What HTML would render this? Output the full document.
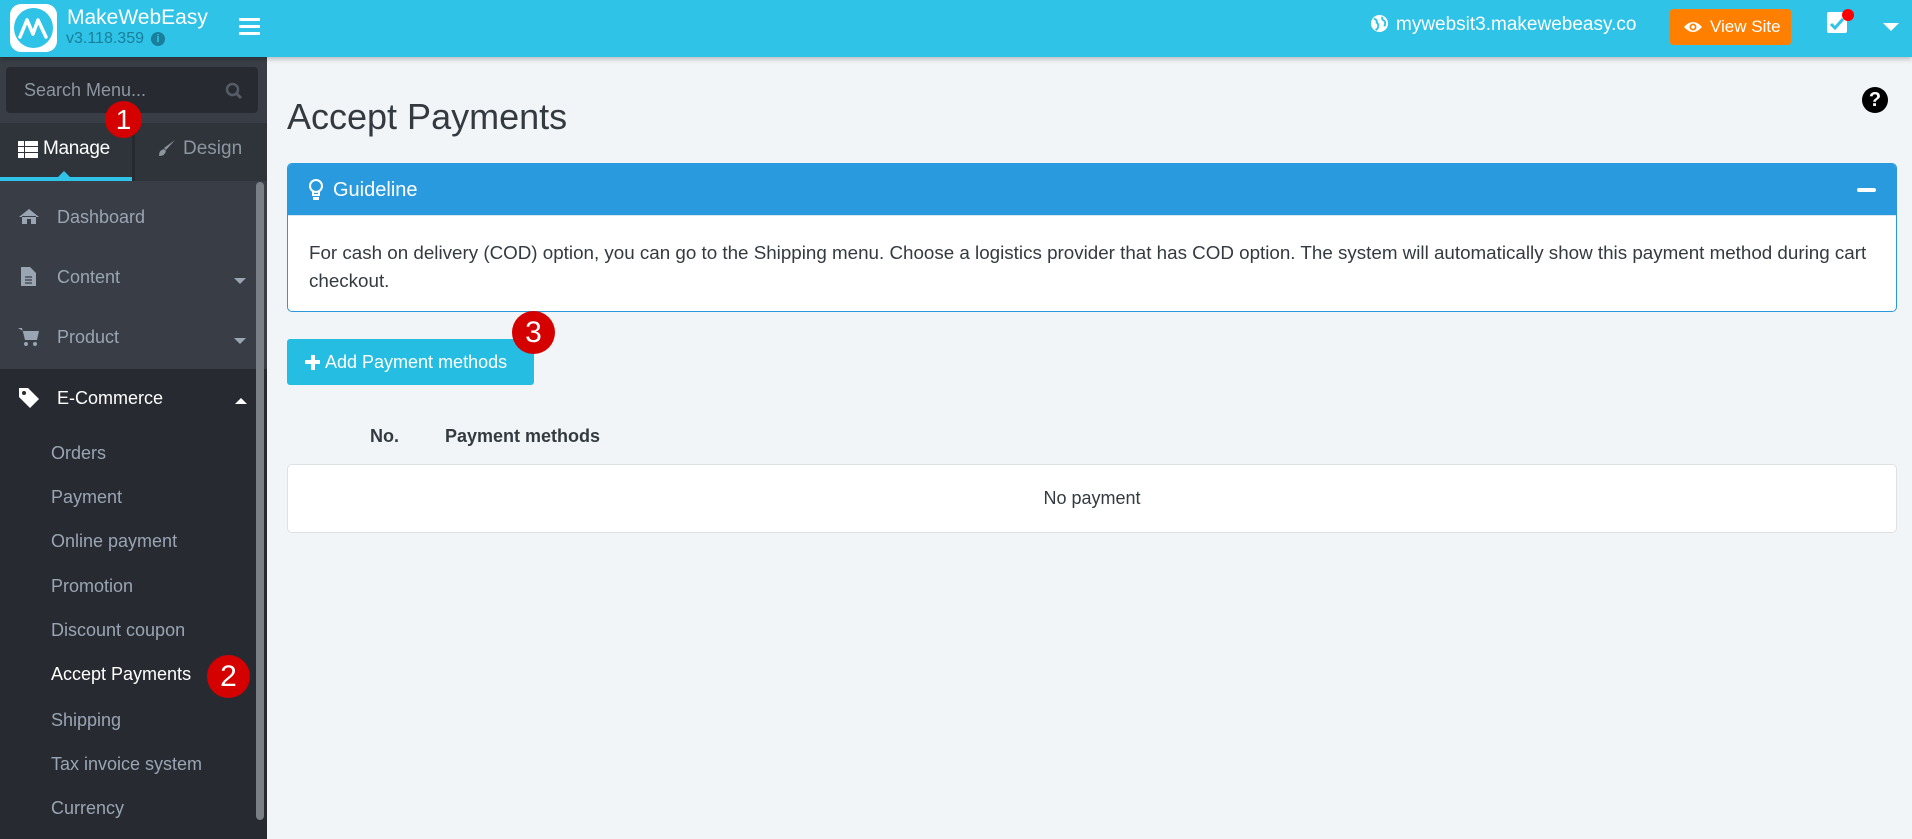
<!DOCTYPE html>
<html><head><meta charset="utf-8"><style>
*{box-sizing:border-box;margin:0;padding:0}
body{width:1912px;height:839px;overflow:hidden;background:#f2f5f8;font-family:"Liberation Sans",Arial,sans-serif;position:relative}
.hdr{position:absolute;left:0;top:0;width:1912px;height:57px;background:#2ec3e7;box-shadow:0 2px 5px rgba(0,0,0,.25);z-index:2}
.abs{position:absolute}
.side{position:absolute;left:0;top:57px;width:267px;height:782px;background:#393e46}
.menu{position:absolute;left:0;width:267px;color:#9aa5b3;font-size:18px}
.sub{position:absolute;left:51px;color:#9aa5b3;font-size:18px}
.badge{position:absolute;width:43px;height:43px;border-radius:50%;background:#d50000;color:#fff;font-size:30px;text-align:center;line-height:43px;z-index:5}
.caret{position:absolute;width:0;height:0;border-left:6px solid transparent;border-right:6px solid transparent}
</style></head><body>
<div class="hdr">
 <div class="abs" style="left:10px;top:4px;width:47px;height:48px;background:#fff;border-radius:11px"></div>
 <div class="abs" style="left:14px;top:8px;width:39px;height:40px;background:#2ec3e7;border-radius:50%"></div>
 <svg class="abs" style="left:17px;top:15px" width="34" height="26" viewBox="0 0 34 26"><path d="M3 22 L10 5 L16 19 L21 5 L29 22" fill="none" stroke="#fff" stroke-width="3.5" stroke-linejoin="round" stroke-linecap="round"/></svg>
 <div class="abs" style="left:67px;top:6px;color:#fff;font-size:21px">MakeWebEasy</div>
 <div class="abs" style="left:66px;top:30px;color:#1a7f9b;font-size:16px">v3.118.359</div>
 <div class="abs" style="left:151px;top:32px;width:14px;height:14px;border-radius:50%;background:#1a7f9b;color:#2ec3e7;font-size:11px;font-weight:bold;text-align:center;line-height:14px">i</div>
 <div class="abs" style="left:239px;top:18px;width:21px;height:3px;background:#fff;box-shadow:0 7px 0 #fff,0 14px 0 #fff"></div>
 <svg class="abs" style="left:1370px;top:14px" width="19" height="19" viewBox="0 0 20 20"><circle cx="10" cy="10" r="9" fill="#fff"/><path d="M4 5 Q8 6 7 9 Q10 11 8 15 L6 17 M13 3 Q12 6 15 7 Q17 10 15 13" fill="none" stroke="#2ec3e7" stroke-width="2"/></svg>
 <div class="abs" style="left:1396px;top:14px;color:#fff;font-size:19px">mywebsit3.makewebeasy.co</div>
 <div class="abs" style="left:1670px;top:9px;width:121px;height:36px;background:#ff8000;border-radius:3px;color:#fff;font-size:17px;line-height:36px;padding-left:40px">View Site</div>
 <svg class="abs" style="left:1683px;top:20px" width="20" height="14" viewBox="0 0 20 14"><path d="M1 7 Q10 -3 19 7 Q10 17 1 7Z" fill="#fff"/><circle cx="10" cy="7" r="3.5" fill="#ff8000"/><circle cx="10" cy="7" r="1.8" fill="#fff"/></svg>
 <div class="abs" style="left:1827px;top:12px;width:20px;height:21px;background:#fff;border-radius:2px"></div>
 <svg class="abs" style="left:1829px;top:15px" width="16" height="16"><path d="M2 9 L6 13 L14 4" fill="none" stroke="#2ec3e7" stroke-width="3"/></svg>
 <div class="abs" style="left:1842px;top:9px;width:12px;height:12px;border-radius:50%;background:#f00"></div>
 <div class="caret" style="left:1883px;top:23px;border-top:8px solid #fff;border-left-width:8px;border-right-width:8px"></div>
</div>

<div class="side">
 <div class="abs" style="left:6px;top:10px;width:252px;height:46px;background:#272b31;border-radius:4px;color:#8d96a0;font-size:18px;line-height:46px;padding-left:18px">Search Menu...</div>
 <svg class="abs" style="left:225px;top:25px" width="18" height="18"><circle cx="7.5" cy="7.5" r="5.5" fill="none" stroke="#555c66" stroke-width="2.5"/><path d="M11.5 11.5 L16 16" stroke="#555c66" stroke-width="3"/></svg>
 <div class="abs" style="left:0;top:66px;width:267px;height:58px;background:#2f343b"></div>
 <div class="abs" style="left:132px;top:66px;width:3px;height:58px;background:#262a30"></div>
 <div class="abs" style="left:0;top:120px;width:132px;height:4px;background:#2ec3e7"></div>
 <div class="caret" style="left:58px;top:114px;border-bottom:6px solid #2ec3e7"></div>
 <div class="abs" style="left:18px;top:84px;width:20px;height:17px;background:repeating-linear-gradient(#fff 0 5px,#2f343b 5px 6px)"></div>
 <div class="abs" style="left:24px;top:84px;width:1px;height:17px;background:#2f343b"></div>
 <div class="abs" style="left:43px;top:81px;color:#fff;font-size:19px;letter-spacing:-0.3px">Manage</div>
 <svg class="abs" style="left:158px;top:82px" width="18" height="18"><path d="M17 1 L8 11 L6 9Z" fill="#8d96a0"/><path d="M6 10 Q1 11 1 17 Q7 17 8 12Z" fill="#8d96a0"/></svg>
 <div class="abs" style="left:183px;top:81px;color:#8d96a0;font-size:19px">Design</div>
 <div class="abs" style="left:0;top:312px;width:267px;height:470px;background:#272b31"></div>
 <div class="abs" style="left:256px;top:125px;width:8px;height:638px;background:#7a7f85;border-radius:4px"></div>

 <svg class="abs" style="left:18px;top:151px" width="22" height="17"><path d="M1 9 L11 1 L21 9 M4 8 V16 H9 V11 H13 V16 H18 V8" fill="#9aa5b3"/></svg>
 <div class="menu" style="top:150px;left:57px;width:auto">Dashboard</div>
 <svg class="abs" style="left:21px;top:210px" width="15" height="19"><path d="M0 0 H9 L15 6 V19 H0Z" fill="#9aa5b3"/><path d="M4 10 H11 M4 13 H11 M4 16 H11" stroke="#393e46" stroke-width="1.3"/></svg>
 <div class="menu" style="top:210px;left:57px;width:auto">Content</div>
 <div class="caret" style="left:234px;top:221px;border-top:6px solid #9aa5b3"></div>
 <svg class="abs" style="left:18px;top:270px" width="22" height="20"><path d="M0 1 H4 L7 13 H19 L21 4 H5" fill="#9aa5b3"/><circle cx="8" cy="17" r="2" fill="#9aa5b3"/><circle cx="17" cy="17" r="2" fill="#9aa5b3"/></svg>
 <div class="menu" style="top:270px;left:57px;width:auto">Product</div>
 <div class="caret" style="left:234px;top:281px;border-top:6px solid #9aa5b3"></div>
 <svg class="abs" style="left:19px;top:331px" width="21" height="20"><path d="M0 0 H9 L20 11 L11 20 L0 9Z" fill="#fff"/><circle cx="5" cy="5" r="2" fill="#272b31"/></svg>
 <div class="menu" style="top:331px;left:57px;width:auto;color:#fff">E-Commerce</div>
 <div class="caret" style="left:235px;top:341px;border-bottom:6px solid #fff"></div>

 <div class="sub" style="top:386px">Orders</div>
 <div class="sub" style="top:430px">Payment</div>
 <div class="sub" style="top:474px">Online payment</div>
 <div class="sub" style="top:519px">Promotion</div>
 <div class="sub" style="top:563px">Discount coupon</div>
 <div class="sub" style="top:607px;color:#fff">Accept Payments</div>
 <div class="sub" style="top:653px">Shipping</div>
 <div class="sub" style="top:697px">Tax invoice system</div>
 <div class="sub" style="top:741px">Currency</div>
</div>
<div class="badge" style="left:105px;top:101px;width:37px;height:37px;line-height:37px;font-size:28px">1</div>
<div class="badge" style="left:207px;top:655px">2</div>
<div class="badge" style="left:512px;top:311px">3</div>

<div class="abs" style="left:287px;top:96px;font-size:36px;color:#333a40">Accept Payments</div>
<div class="abs" style="left:1862px;top:87px;width:26px;height:26px;border-radius:50%;background:#000;color:#fff;font-weight:bold;font-size:20px;text-align:center;line-height:26px">?</div>

<div class="abs" style="left:287px;top:163px;width:1610px;height:149px;border:1px solid #2a98de;border-radius:5px;background:#fff;overflow:hidden">
 <div style="height:52px;background:#2a9ade;border-bottom:1px solid #d8e6ee"></div>
 <svg class="abs" style="left:20px;top:15px" width="16" height="22"><circle cx="8" cy="7" r="6" fill="none" stroke="#fff" stroke-width="2"/><path d="M5 13 V16 H11 V13" fill="none" stroke="#fff" stroke-width="2"/><rect x="5" y="18" width="6" height="3" fill="#fff"/></svg>
 <div class="abs" style="left:45px;top:15px;color:#fff;font-size:20px">Guideline</div>
 <div class="abs" style="left:1569px;top:24px;width:19px;height:4px;background:#fff;border-radius:2px"></div>
 <div class="abs" style="left:21px;top:75px;white-space:nowrap;color:#333a40;font-size:18.8px;line-height:28px">For cash on delivery (COD) option, you can go to the Shipping menu. Choose a logistics provider that has COD option. The system will automatically show this payment method during cart<br>checkout.</div>
</div>

<div class="abs" style="left:287px;top:339px;width:247px;height:46px;background:#25bde2;border-radius:3px;color:#fff;font-size:18px;line-height:46px;padding-left:38px">Add Payment methods</div>
<div class="abs" style="left:305px;top:360px;width:15px;height:4px;background:#fff"></div>
<div class="abs" style="left:310.5px;top:354.5px;width:4px;height:15px;background:#fff"></div>

<div class="abs" style="left:370px;top:426px;font-size:18px;font-weight:bold;color:#333a40">No.</div>
<div class="abs" style="left:445px;top:426px;font-size:18px;font-weight:bold;color:#333a40">Payment methods</div>
<div class="abs" style="left:287px;top:464px;width:1610px;height:69px;background:#fff;border:1px solid #dde1e5;border-radius:5px;text-align:center;line-height:67px;font-size:18px;color:#333a40">No payment</div>
</body></html>
